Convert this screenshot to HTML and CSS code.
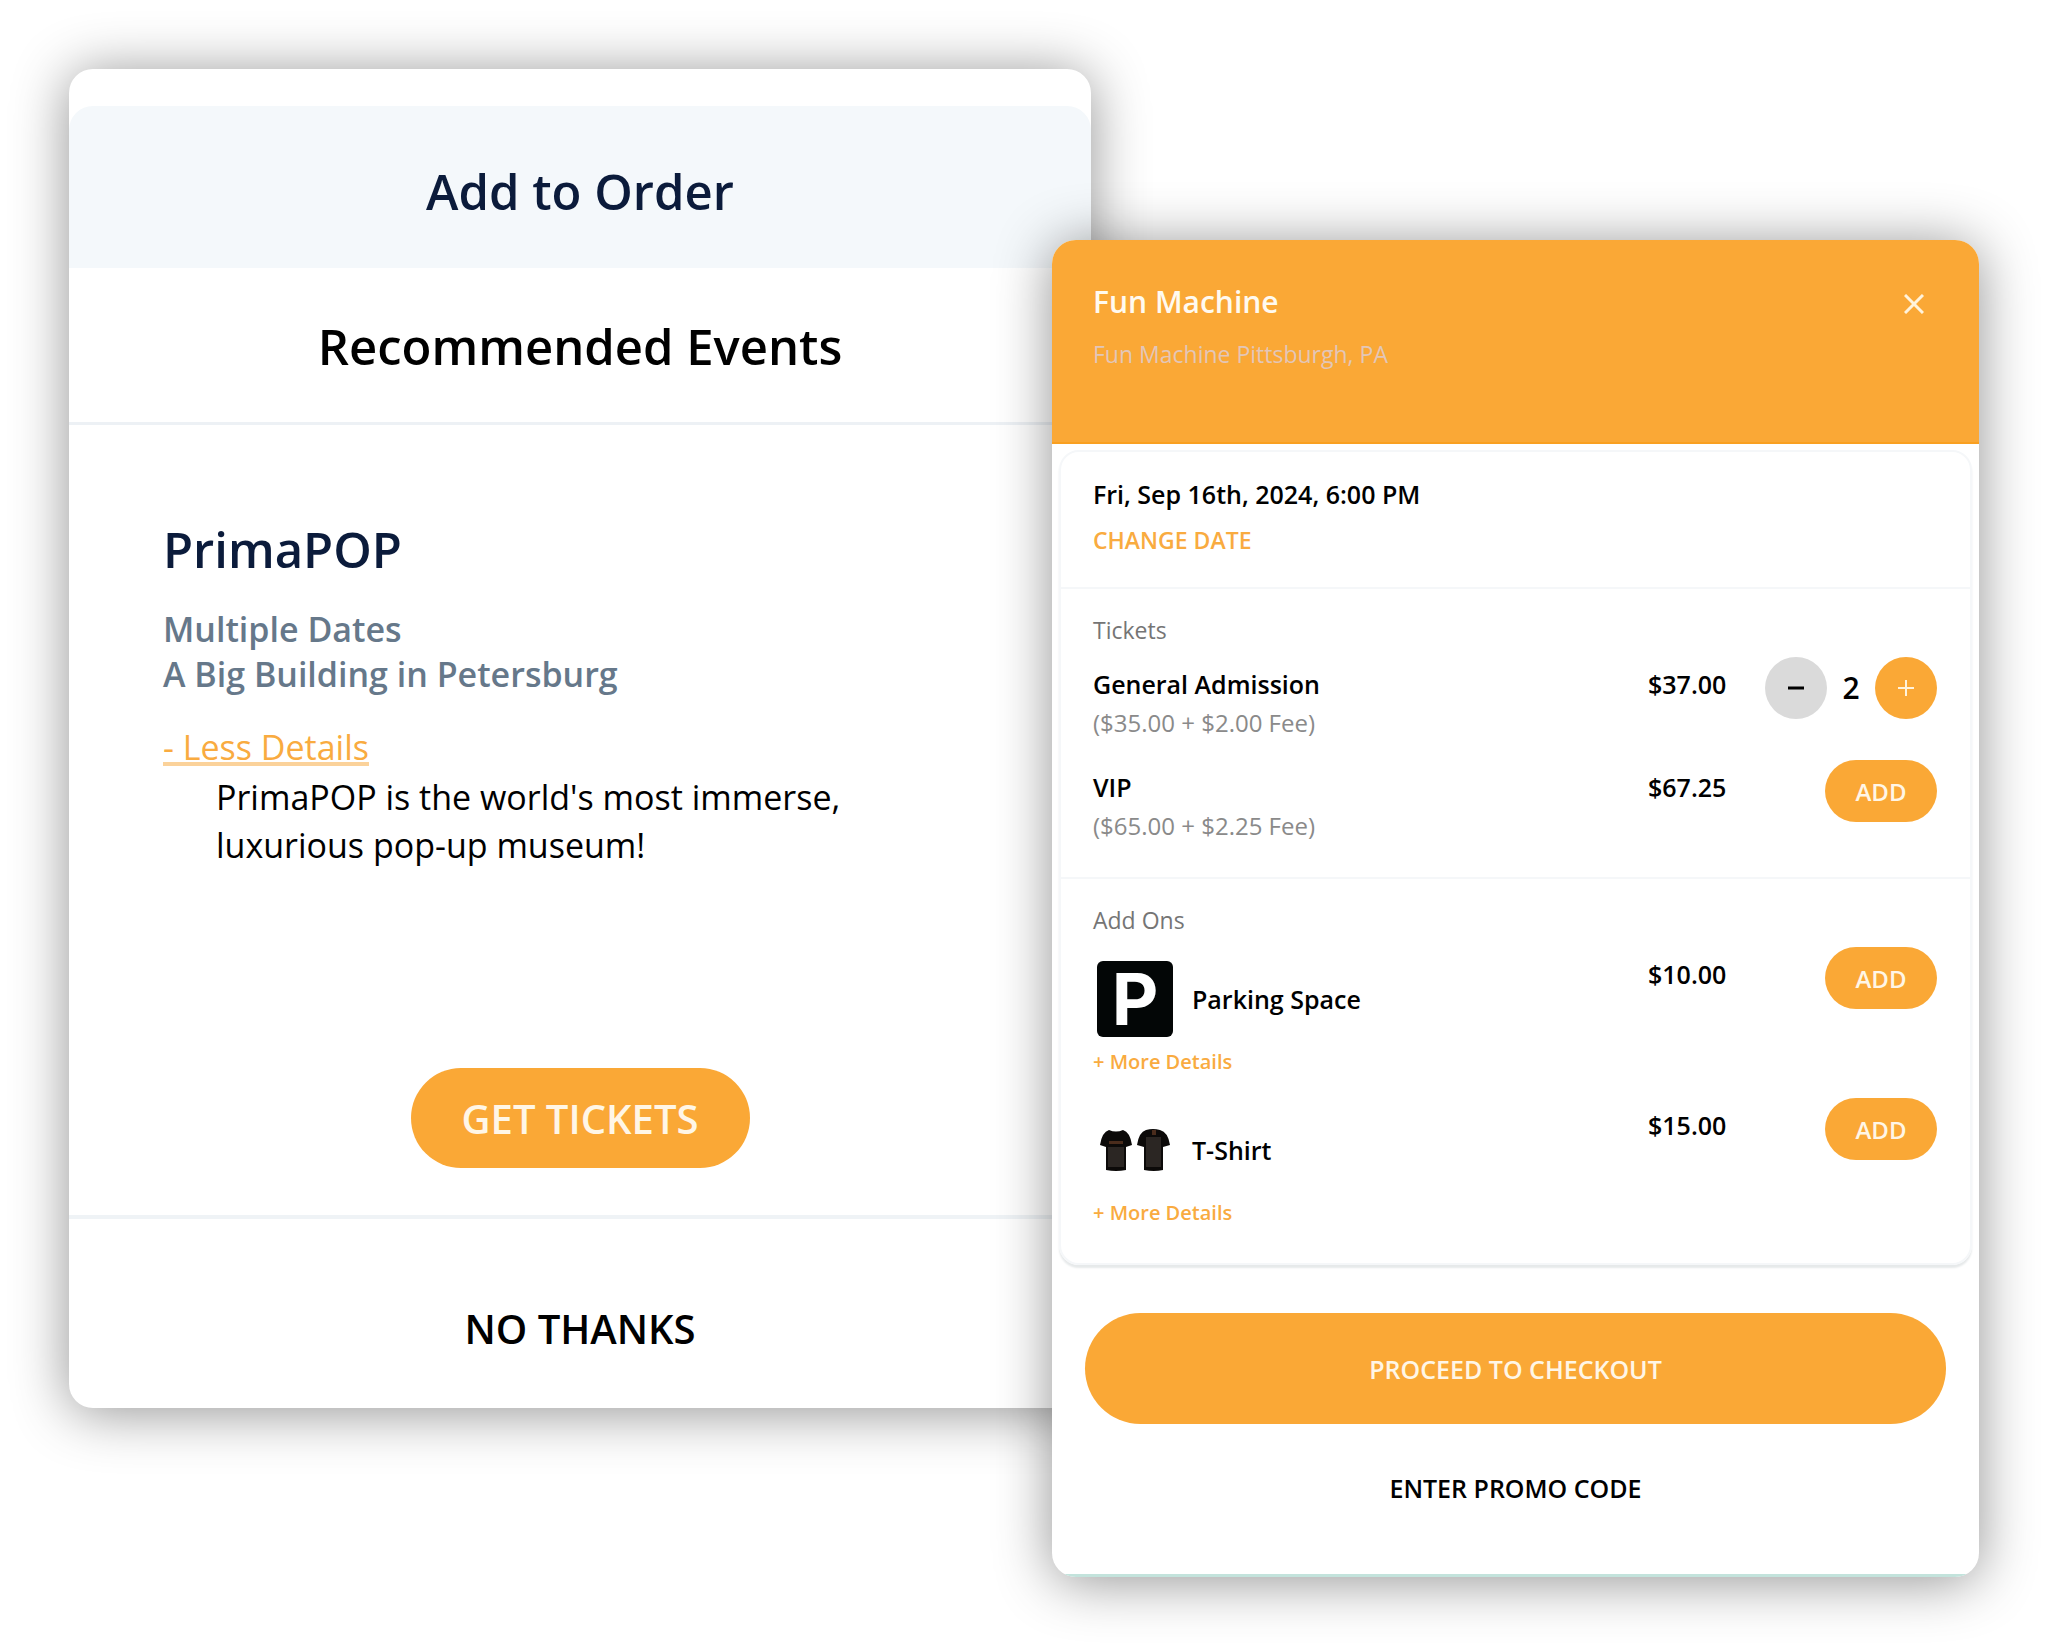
FILE: index.html
```html
<!DOCTYPE html>
<html lang="en">
<head>
<meta charset="UTF-8" />
<meta name="viewport" content="width=device-width, initial-scale=1" />
<title>Fun Machine - Add to Order</title>
<link rel="stylesheet" href="styles.css">
</head>
<body>
<main class="stage">

  <section class="card upsell">
    <header class="upsell-header"><h1>Add to Order</h1></header>
    <h2 class="upsell-title">Recommended Events</h2>
    <div class="upsell-body">
      <h3>PrimaPOP</h3>
      <p class="event-meta">Multiple Dates<br>A Big Building in Petersburg</p>
      <a href="#" class="less">- Less Details</a>
      <p class="event-text">PrimaPOP is the world's most immerse, luxurious pop-up museum!</p>
      <button type="button" class="btn get-tickets">GET TICKETS</button>
    </div>
    <footer class="upsell-footer">
      <button type="button" class="btn-text no-thanks">NO THANKS</button>
    </footer>
  </section>

  <section class="card checkout">
    <header class="checkout-header">
      <div>
        <h2>Fun Machine</h2>
        <p>Fun Machine Pittsburgh, PA</p>
      </div>
      <button type="button" class="close" aria-label="Close">
        <svg width="20" height="20" viewBox="0 0 20 20"><path d="M1 1L19 19M19 1L1 19" stroke="#fff3dc" stroke-width="3" fill="none"/></svg>
      </button>
    </header>

    <div class="order">
      <div class="order-section date">
        <p class="name">Fri, Sep 16th, 2024, 6:00 PM</p>
        <a href="#" class="change">CHANGE DATE</a>
      </div>

      <div class="order-section tickets">
        <h3>Tickets</h3>
        <div class="row">
          <div class="ticket">
            <p class="name">General Admission</p>
            <p class="fee">($35.00 + $2.00 Fee)</p>
          </div>
          <span class="price">$37.00</span>
          <div class="stepper">
            <button type="button" class="round minus" aria-label="Remove one">
              <svg width="16" height="16" viewBox="0 0 16 16"><path d="M0 8H16" stroke="#000" stroke-width="3"/></svg>
            </button>
            <span class="qty">2</span>
            <button type="button" class="round" aria-label="Add one">
              <svg width="16" height="16" viewBox="0 0 16 16"><path d="M0 8H16M8 0V16" stroke="#fff3dc" stroke-width="2"/></svg>
            </button>
          </div>
        </div>
        <div class="row">
          <div class="ticket">
            <p class="name">VIP</p>
            <p class="fee">($65.00 + $2.25 Fee)</p>
          </div>
          <span class="price">$67.25</span>
          <button type="button" class="btn add">ADD</button>
        </div>
      </div>

      <div class="order-section addons">
        <h3>Add Ons</h3>
        <div class="row">
          <div class="addon">
            <div class="addon-name">
              <span class="thumb parking">P</span>
              <p class="name">Parking Space</p>
            </div>
            <a href="#" class="more">+ More Details</a>
          </div>
          <span class="price">$10.00</span>
          <button type="button" class="btn add">ADD</button>
        </div>
        <div class="row">
          <div class="addon">
            <div class="addon-name">
              <svg class="thumb" viewBox="5 0 76 76">
                <!-- front -->
                <path d="M17 18Q24 21 31 18Q38 20 40 33L34 35V58Q24 60 14 58V35L8 33Q10 20 17 18Z" fill="#0c0a09"/>
                <path d="M16 35H32V55H16Z" fill="#2b2623"/>
                <path d="M17 29H31V32H17Z" fill="#4a2c1c"/>
                <!-- back -->
                <path d="M54 18Q61 16 68 18Q76 20 78 33L71 35V58Q62 60 52 58V35L45 33Q47 20 54 18Z" fill="#0c0a09"/>
                <path d="M54 25H69V55H54Z" fill="#2b2623"/>
                <path d="M60 18H64V23H60Z" fill="#4a2c1c"/>
              </svg>
              <p class="name">T-Shirt</p>
            </div>
            <a href="#" class="more">+ More Details</a>
          </div>
          <span class="price">$15.00</span>
          <button type="button" class="btn add">ADD</button>
        </div>
      </div>
    </div>

    <footer class="checkout-footer">
      <button type="button" class="btn proceed">PROCEED TO CHECKOUT</button>
      <button type="button" class="btn-text promo">ENTER PROMO CODE</button>
    </footer>
  </section>

</main>
</body>
</html>
```

FILE: styles.css
```css
* {
  box-sizing: border-box;
}
body {
  margin: 0;
  background: #fff;
  color: #000;
  font-family: "Open Sans", "Noto Sans", sans-serif;
}
h1, h2, h3, p {
  margin: 0;
  font-weight: 600;
}
button {
  padding: 0;
  border: none;
  font-family: inherit;
  font-weight: 600;
  cursor: pointer;
}
svg {
  display: block;
}

/* two cards, the second one overlaps the first */
.stage {
  display: grid;
  grid-template-columns: 983fr 39fr 888fr;
  align-items: start;
  padding: 69px 69px 68px;
}
.card {
  background: #fff;
  border-radius: 24px;
  overflow: hidden;
  box-shadow: 0 4px 56px rgba(0, 0, 0, 0.43);
}
.upsell {
  grid-column: 1 / 3;
  grid-row: 1;
  padding-top: 37px;
}
.checkout {
  grid-column: 2 / 4;
  grid-row: 1;
  margin-top: 171px;
}

.btn {
  background: #faa836;
  color: #fff6e6;
  border-radius: 60px;
}
.btn-text {
  background: none;
  color: #000;
}

/* add to order */
.upsell-header {
  padding-top: 8px;
  background: #f4f8fb;
  border-radius: 24px 24px 0 0;
}
.upsell-header h1,
.upsell-title {
  font-size: 49px;
  line-height: 154px;
  text-align: center;
}
.upsell-header h1,
.upsell-body h3 {
  color: #0b1b3b;
}
.upsell-title {
  padding-top: 2px;
  line-height: 152px;
  border-bottom: 3px solid #edf1f5;
}
.upsell-body {
  display: flex;
  flex-direction: column;
  align-items: flex-start;
  padding: 94px 94px 47px;
  border-bottom: 4px solid #eff3f6;
}
.upsell-body h3 {
  font-size: 49px;
  line-height: 60px;
}
.event-meta {
  margin: 28px 0 26px;
  font-size: 34px;
  line-height: 45px;
  color: #66788a;
}
.less {
  font-size: 34px;
  line-height: 48px;
  color: #f9ab40;
  text-decoration: underline 4px #fbd29a;
  text-decoration-skip-ink: none;
  text-underline-offset: 2px;
}
.event-text {
  margin-top: 2px;
  padding: 0 53px;
  font-size: 34px;
  font-weight: 400;
  line-height: 48px;
}
.get-tickets {
  align-self: center;
  width: 339px;
  height: 100px;
  margin-top: 199px;
  font-size: 40px;
}
.upsell-footer {
  padding: 80px 0 49px;
  text-align: center;
}
.no-thanks {
  font-size: 40px;
  line-height: 60px;
}

/* checkout */
.checkout-header {
  display: flex;
  justify-content: space-between;
  align-items: flex-start;
  height: 204px;
  padding: 42px 55px 0 41px;
  background: #faa836;
  border-bottom: 2px solid #f9a021;
}
.checkout-header h2 {
  font-size: 30px;
  line-height: 40px;
  color: #fffaf0;
}
.checkout-header p {
  margin-top: 16px;
  font-size: 23px;
  font-weight: 400;
  line-height: 32px;
  color: #e3c6b8;
}
.close {
  margin-top: 12px;
  background: none;
}
.order {
  margin: 6px 7px 0;
  border: 2px solid #f5f7f9;
  border-radius: 20px;
  box-shadow: 0 3px 2px #e6e9ea;
}
.order-section {
  padding: 25px 33px 31px 32px;
}
.order-section + .order-section {
  border-top: 2px solid #f5f7f9;
}
.order-section.date {
  padding: 23px 33px 29px 32px;
}
.order-section h3 {
  margin-bottom: 11px;
  font-size: 23px;
  font-weight: 400;
  line-height: 32px;
  color: #757575;
}
.order-section.addons {
  padding-bottom: 36px;
}
.name {
  font-size: 25px;
  line-height: 38px;
}
.change {
  display: block;
  margin-top: 9px;
  font-size: 23px;
  font-weight: 600;
  line-height: 36px;
  color: #f9ab40;
  text-decoration: none;
}
.row {
  display: grid;
  grid-template-columns: 1fr 117px 172px;
  align-items: start;
}
.ticket {
  padding-top: 8px;
}
.tickets .row + .row {
  margin-top: 17px;
}
.fee {
  font-size: 24px;
  font-weight: 400;
  line-height: 40px;
  color: #8a8a8a;
}
.price {
  padding-top: 8px;
  font-size: 25px;
  font-weight: 600;
  line-height: 38px;
}
.add {
  justify-self: end;
  width: 112px;
  height: 62px;
  font-size: 24px;
}
.stepper {
  display: flex;
  justify-content: space-between;
  align-items: center;
}
.round {
  display: flex;
  justify-content: center;
  align-items: center;
  width: 62px;
  height: 62px;
  border-radius: 50%;
  background: #faa836;
}
.minus {
  background: #dadada;
}
.qty {
  font-size: 30px;
  font-weight: 600;
  line-height: 58px;
}
.addons .row + .row {
  margin-top: 22px;
}
.addon {
  padding-top: 14px;
}
.addon-name {
  display: flex;
  align-items: center;
  gap: 19px;
  padding-left: 4px;
}
.thumb {
  width: 76px;
  height: 76px;
}
.parking {
  background: #030606;
  border-radius: 6px;
  color: #fff;
  font-family: Inter, sans-serif;
  font-size: 72px;
  font-weight: 700;
  line-height: 76px;
  text-align: center;
}
.more {
  display: block;
  margin-top: 11px;
  font-size: 20px;
  font-weight: 600;
  line-height: 28px;
  color: #f9ab40;
  text-decoration: none;
}
.checkout-footer {
  display: flex;
  flex-direction: column;
  align-items: center;
  padding: 48px 33px 56px;
  border-bottom: 3px solid #c3e3dc;
}
.proceed {
  width: 100%;
  height: 111px;
  font-size: 25px;
}
.promo {
  margin-top: 34px;
  font-size: 25px;
  line-height: 60px;
}
```
